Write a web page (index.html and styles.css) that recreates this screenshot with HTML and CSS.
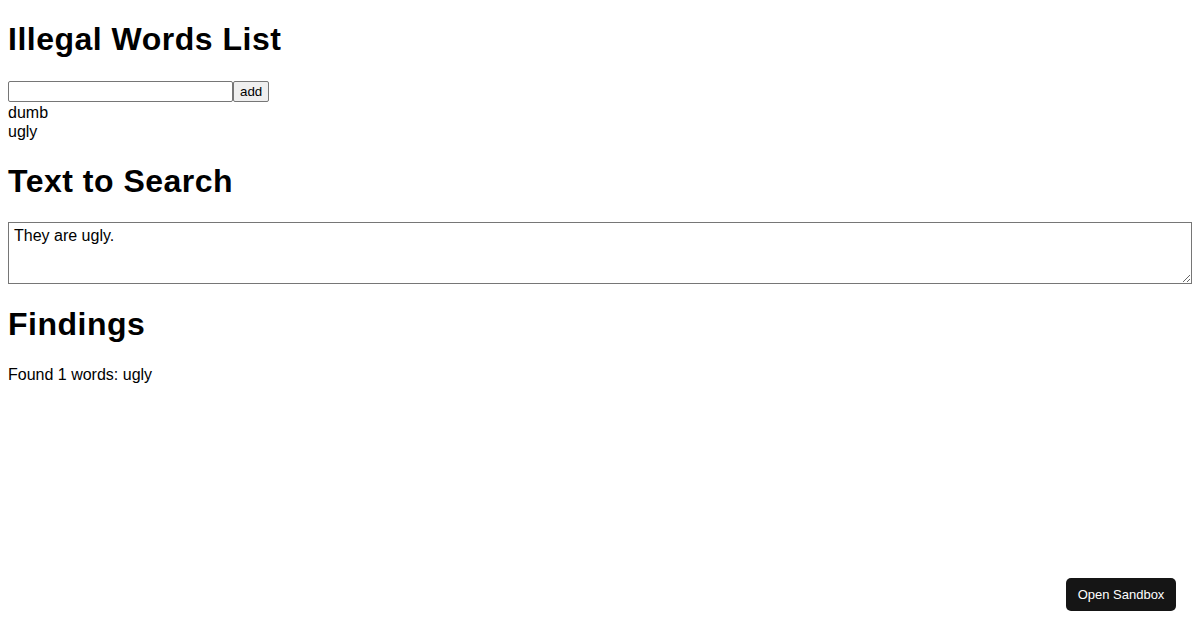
FILE: index.html
```html
<!DOCTYPE html>
<html>
<head>
<meta charset="utf-8">
<link rel="stylesheet" href="styles.css">
</head>
<body>
<h1>Illegal Words List</h1>
<div class="add-row"><input type="text" class="word-input"><button class="add-btn">add</button></div>
<div class="word">dumb</div>
<div class="word">ugly</div>
<h1>Text to Search</h1>
<div class="text-row"><textarea class="search-text">They are ugly.</textarea></div>
<h1>Findings</h1>
<p>Found 1 words: ugly</p>
<button class="sandbox-btn">Open Sandbox</button>
</body>
</html>
```
FILE: styles.css
```css
html {
  margin: 0;
  padding: 0;
}
body {
  margin: 0 8px 8px 8px;
  padding-top: 0.02px;
  font-family: "Liberation Sans", Arial, sans-serif;
  font-size: 16px;
  color: #000;
  background: #fff;
}
h1 {
  font-size: 32px;
  font-weight: bold;
  letter-spacing: 0.5px;
  margin: 21.44px 0;
}
.add-row {
  display: flex;
  align-items: flex-start;
  padding: 1px 0 2.4px 0;
}
.word-input {
  width: 225px;
  height: 21px;
  box-sizing: border-box;
  margin: 0;
  border: 1px solid #767676;
  border-radius: 2px;
  font-family: "Liberation Sans", Arial, sans-serif;
  font-size: 13.33px;
  padding: 1px 2px;
}
.add-btn {
  height: 21px;
  box-sizing: border-box;
  margin: 0;
  padding: 1px 6px;
  font-family: "Liberation Sans", Arial, sans-serif;
  font-size: 13.33px;
  background: #efefef;
  border: 1px solid #767676;
  border-radius: 2px;
  color: #000;
}
.word {
  line-height: 18.6px;
}
.text-row {
  padding-top: 1px;
}
.search-text {
  display: block;
  width: 100%;
  height: 62px;
  box-sizing: border-box;
  margin: 0;
  padding: 4px 5px;
  border: 1px solid #767676;
  font-family: "Liberation Sans", Arial, sans-serif;
  font-size: 16px;
  color: #000;
}
p {
  margin: 23.4px 0 16px 0;
}
.sandbox-btn {
  position: fixed;
  right: 24px;
  bottom: 19px;
  width: 110px;
  height: 33px;
  background: #151515;
  color: #fff;
  border: none;
  border-radius: 5px;
  font-family: "Liberation Sans", Arial, sans-serif;
  font-size: 13px;
  padding: 0;
}
```
